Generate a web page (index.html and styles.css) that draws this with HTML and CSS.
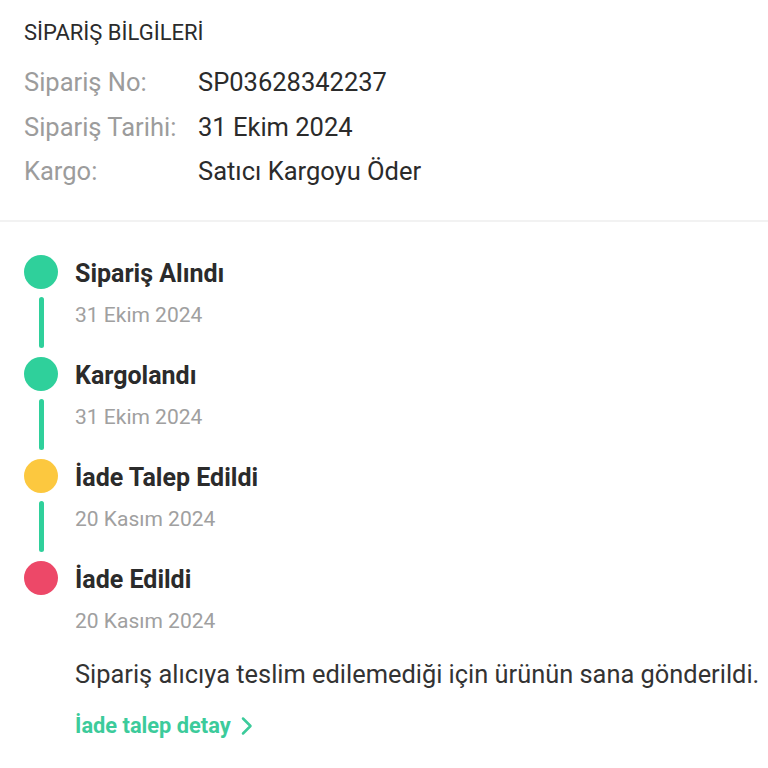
FILE: index.html
```html
<!DOCTYPE html>
<html lang="tr">
<head>
    <meta charset="UTF-8">
    <meta name="viewport" content="width=device-width, initial-scale=1.0">
    <title>Sipariş Bilgileri</title>
    <link rel="stylesheet" href="styles.css">
</head>
<body>

<section class="info">
    <h2 class="info-title">SİPARİŞ BİLGİLERİ</h2>
    <div class="info-row">
        <span class="info-label">Sipariş No:</span>
        <span class="info-value">SP03628342237</span>
    </div>
    <div class="info-row">
        <span class="info-label">Sipariş Tarihi:</span>
        <span class="info-value">31 Ekim 2024</span>
    </div>
    <div class="info-row">
        <span class="info-label">Kargo:</span>
        <span class="info-value">Satıcı Kargoyu Öder</span>
    </div>
</section>

<section class="timeline">
    <div class="step">
        <div class="step-marker">
            <span class="dot green"></span>
            <span class="line"></span>
        </div>
        <div class="step-body">
            <div class="step-title">Sipariş Alındı</div>
            <div class="step-date">31 Ekim 2024</div>
        </div>
    </div>
    <div class="step">
        <div class="step-marker">
            <span class="dot green"></span>
            <span class="line"></span>
        </div>
        <div class="step-body">
            <div class="step-title">Kargolandı</div>
            <div class="step-date">31 Ekim 2024</div>
        </div>
    </div>
    <div class="step">
        <div class="step-marker">
            <span class="dot yellow"></span>
            <span class="line"></span>
        </div>
        <div class="step-body">
            <div class="step-title">İade Talep Edildi</div>
            <div class="step-date">20 Kasım 2024</div>
        </div>
    </div>
    <div class="step">
        <div class="step-marker">
            <span class="dot red"></span>
        </div>
        <div class="step-body">
            <div class="step-title">İade Edildi</div>
            <div class="step-date">20 Kasım 2024</div>
            <p class="step-note">Sipariş alıcıya teslim edilemediği için ürünün sana gönderildi.</p>
            <a class="step-link" href="#">İade talep detay
                <svg width="14" height="20" viewBox="0 0 14 20"><path d="M3 2.5l7.5 7.5-7.5 7.5" fill="none" stroke="currentColor" stroke-width="2.5" stroke-linecap="round" stroke-linejoin="round"/></svg>
            </a>
        </div>
    </div>
</section>

</body>
</html>
```

FILE: styles.css
```css
body {
    margin: 0;
    padding: 0;
    background-color: #fff;
    font-family: Roboto, "Noto Sans", Arial, sans-serif;
    color: #333;
}
.info {
    padding: 16px 24px 26px;
    border-bottom: 2px solid #f2f2f2;
}
.info-title {
    margin: 0 0 11px;
    font-size: 22px;
    font-weight: 400;
    line-height: 33px;
    color: #2b2b2b;
}
.info-row {
    display: flex;
    font-size: 25.5px;
    line-height: 44.5px;
}
.info-label {
    width: 174px;
    color: #9c9c9c;
}
.info-value {
    color: #2b2b2b;
}
.timeline {
    padding: 33.5px 24px 0;
}
.step {
    display: flex;
    gap: 17px;
}
.step-marker {
    display: flex;
    flex-direction: column;
    align-items: center;
    flex-shrink: 0;
    width: 34px;
    height: 102px;
}
.dot {
    width: 34px;
    height: 34px;
    border-radius: 50%;
}
.dot.green { background-color: #2fd09b; }
.dot.yellow { background-color: #fcc83f; }
.dot.red { background-color: #ed4868; }
.line {
    width: 5px;
    height: 51px;
    margin-top: 8px;
    border-radius: 3px;
    background-color: #2fd09b;
}
.step-title {
    padding-top: 2px;
    font-size: 25px;
    font-weight: 700;
    line-height: 34px;
    color: #2b2b2b;
}
.step-date {
    margin-top: 8.5px;
    font-size: 21px;
    line-height: 30px;
    color: #a0a0a0;
}
.step-note {
    margin: 22.5px 0 0;
    font-size: 25.4px;
    line-height: 32px;
    color: #333;
    white-space: nowrap;
}
.step-link {
    display: flex;
    align-items: center;
    gap: 9px;
    width: max-content;
    margin-top: 21px;
    font-size: 21.8px;
    font-weight: 700;
    line-height: 30px;
    color: #3ccb9b;
    text-decoration: none;
}
```
